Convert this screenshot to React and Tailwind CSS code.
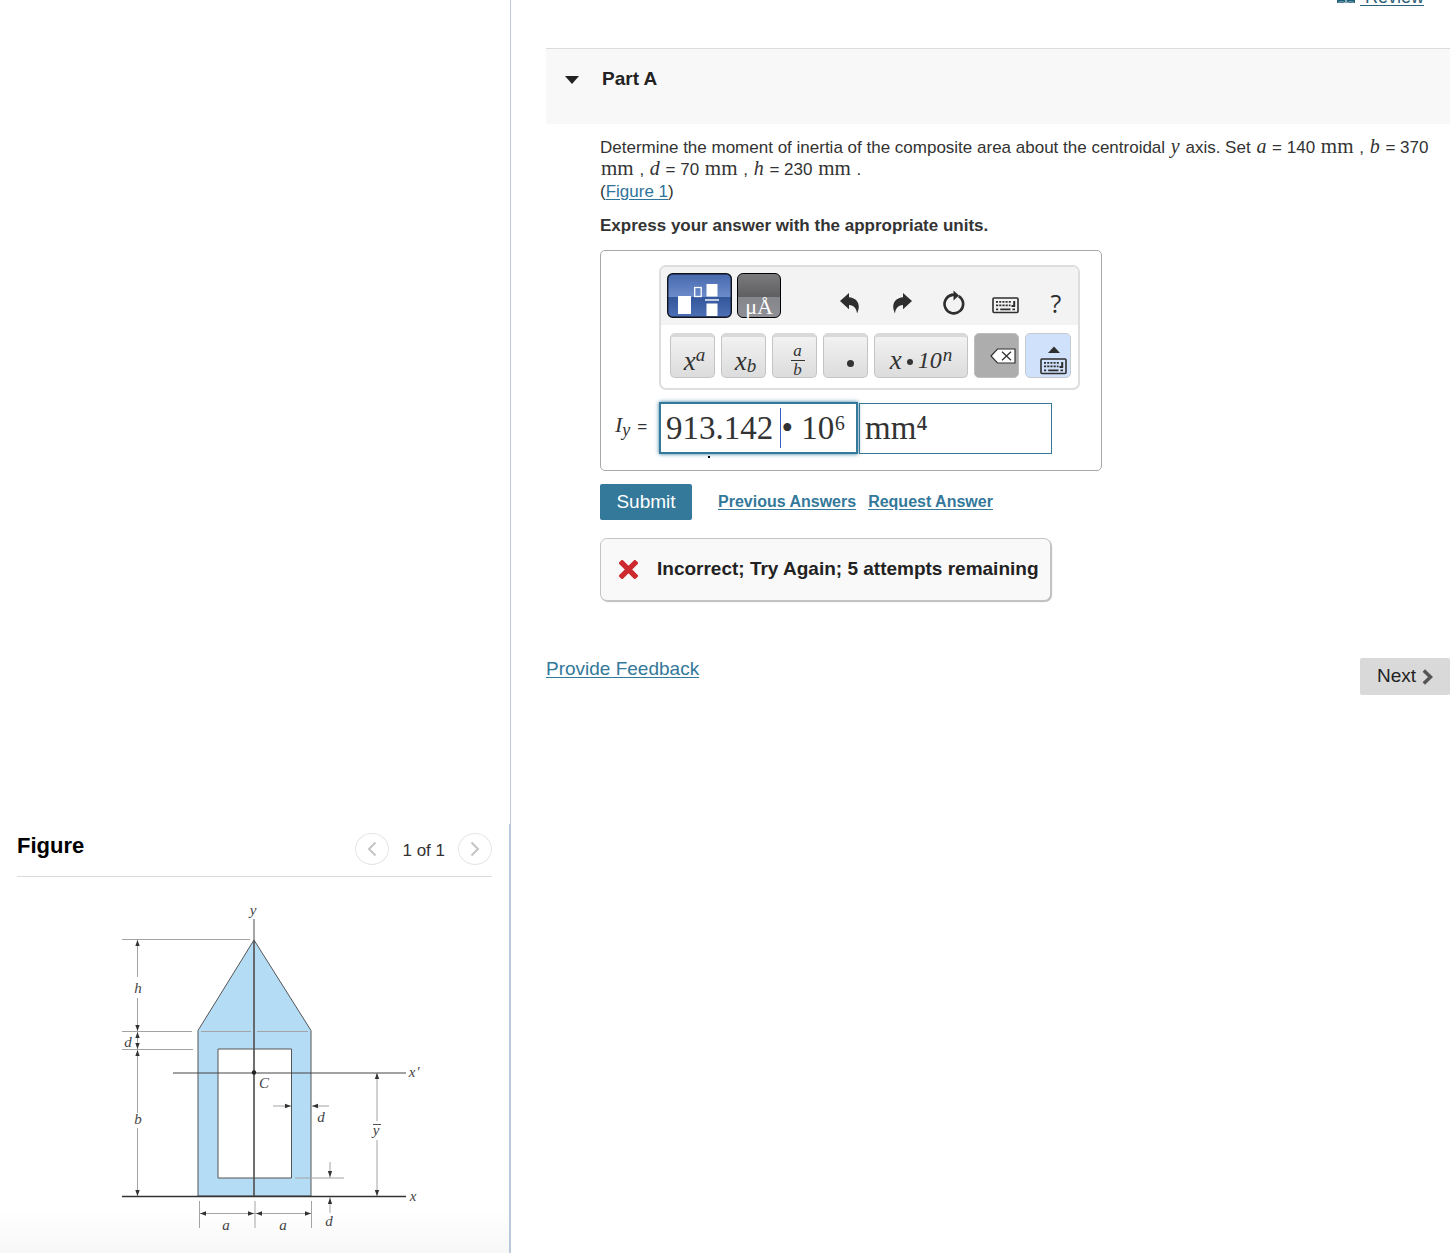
import React from "react";

const serif = "font-['Liberation_Serif',serif]";

function MathVar({ children }) {
  return (
    <i className="mx-px font-['Liberation_Serif',serif] text-[20px] leading-0">{children}</i>
  );
}

function Unit() {
  return <span className="mx-px font-['Liberation_Serif',serif] text-[21px] leading-0">mm</span>;
}

function KeyboardIcon() {
  return (
    <svg width="28" height="17" viewBox="0 0 28 17" aria-hidden="true">
      <rect x="1" y="1" width="25" height="14.5" rx="1" fill="none" stroke="#2e2e2e" strokeWidth="1.6" />
      <g stroke="#2e2e2e" fill="none">
        <path d="M4 4.9H20" strokeWidth="1.700" strokeDasharray="2 1.200" />
        <path d="M4 8.400H18.500" strokeWidth="1.700" strokeDasharray="2.200 1" />
        <path d="M4 12.300H6.200M8.200 12.300H18.500M20.500 12.300H23" strokeWidth="1.700" />
        <path d="M22.200 4V9H19.500" strokeWidth="2" />
      </g>
    </svg>
  );
}

function IconButton({ label, children }) {
  return (
    <button type="button" aria-label={label} className="flex h-8 w-8 items-center justify-center text-[#2e2e2e]">
      {children}
    </button>
  );
}

function KeyButton({ label, wide, children }) {
  return (
    <button
      type="button"
      aria-label={label}
      className={
        (wide ? "w-[94px]" : "w-[45px]") +
        " flex h-[45px] shrink-0 items-start justify-center rounded-[5px] border border-[#c4c4c4] border-t-4 border-t-[#d9d9d9] bg-linear-to-b from-[#f2f2f2] to-[#dcdcdc] text-[#333]"
      }
    >
      {children}
    </button>
  );
}

function Toolbar() {
  return (
    <div className="w-[421px] rounded-[7px] border-2 border-[#dedede] bg-white pb-[10px]">
      <div className="flex h-[58px] items-start rounded-t-[5px] bg-[#f3f3f3] pt-[6px] pl-[6px]">
        <button type="button" aria-label="Templates" className="rounded-[6px]">
          <svg width="65" height="45" viewBox="0 0 65 45">
            <defs>
              <linearGradient id="blueTop" x1="0" y1="0" x2="0" y2="1">
                <stop offset="0" stopColor="#4668ad" />
                <stop offset="0.53" stopColor="#6c8bc9" />
                <stop offset="0.54" stopColor="#34569b" />
                <stop offset="1" stopColor="#4d70b6" />
              </linearGradient>
            </defs>
            <rect x="0.7" y="0.7" width="63.6" height="43.6" rx="5" fill="url(#blueTop)" stroke="#10131c" strokeWidth="1.4" />
            <rect x="11" y="23" width="13" height="18" fill="#fff" />
            <rect x="27.7" y="14.5" width="6.5" height="9" fill="none" stroke="#fff" strokeWidth="1.3" />
            <rect x="39.5" y="11" width="11" height="12.5" fill="#fff" />
            <path d="M38 27H52" stroke="#fff" strokeWidth="1.4" />
            <rect x="39.5" y="30.5" width="11" height="12.5" fill="#fff" />
          </svg>
        </button>
        <button
          type="button"
          aria-label="Units and symbols"
          className="ml-[5px] flex h-[45px] w-11 items-end justify-center rounded-[6px] border border-black bg-[linear-gradient(#7b7b7d,#5f5f61_53%,#85858c_54%,#8f8f96)]"
        >
          <span className="font-['Liberation_Serif',serif] text-[22px] leading-[20px] text-white">μÅ</span>
        </button>
        <div className="ml-[53px] flex items-center gap-[20px] pt-[14px]">
          <IconButton label="Undo">
            <svg width="20" height="21" viewBox="0 0 20 21" fill="currentColor">
              <path d="M0 8 9 0v4.2c8 .6 12.500 7 8 16.300C16.600 15.500 14 12.300 9 12v4.200Z" />
            </svg>
          </IconButton>
          <IconButton label="Redo">
            <svg width="20" height="21" viewBox="0 0 20 21" fill="currentColor">
              <path d="M20 8 11 0v4.200C3 4.800-1.500 11.200 3 20.500 3.400 15.500 6 12.300 11 12v4.200Z" />
            </svg>
          </IconButton>
          <IconButton label="Reset">
            <svg width="24" height="26" viewBox="0 0 24 26">
              <path d="M15.500 5.500A9.300 9.300 0 1 1 9 5.200" transform="rotate(8 12 14)" fill="none" stroke="currentColor" strokeWidth="2.600" />
              <path d="M11.500 0.500 17 5.500 11.500 10.500Z" fill="currentColor" />
              <path d="M8 5.700Q10 4.600 12.500 4.600" fill="none" stroke="currentColor" strokeWidth="2.600" />
            </svg>
          </IconButton>
          <IconButton label="Keyboard shortcuts">
            <span className="pt-1"><KeyboardIcon /></span>
          </IconButton>
          <IconButton label="Help">
            <span className="pr-1 font-['Open_Sans',sans-serif] text-[25px] leading-none">?</span>
          </IconButton>
        </div>
      </div>
      <div className={"flex gap-[6px] pt-2 pl-[9px] italic " + serif}>
        <KeyButton label="Superscript">
          <span className="mt-[10px] ml-1 text-[27px] leading-7">x</span>
          <span className="mt-[6px] text-[19px] leading-6">a</span>
        </KeyButton>
        <KeyButton label="Subscript">
          <span className="mt-[10px] ml-1 text-[27px] leading-7">x</span>
          <span className="mt-[17px] text-[19px] leading-6">b</span>
        </KeyButton>
        <KeyButton label="Fraction">
          <span className="mt-[6px] ml-[6px] flex w-[14px] flex-col items-center text-[17px] leading-4">
            <span className="w-full border-b border-[#333] pb-px">a</span>
            <span className="pt-px">b</span>
          </span>
        </KeyButton>
        <KeyButton label="Multiplication dot">
          <span className="mt-[23px] ml-[10px] h-[7px] w-[7px] rounded-full bg-[#333]" />
        </KeyButton>
        <KeyButton label="Scientific notation" wide>
          <span className="mt-[9px] text-[27px] leading-7">x</span>
          <span className="mx-[5px] mt-[22px] h-[6px] w-[6px] rounded-full bg-[#333]" />
          <span className="mt-[9px] text-[24px] leading-7">10</span>
          <span className="mt-[6px] ml-px text-[19px] leading-6">n</span>
        </KeyButton>
        <button type="button" aria-label="Delete" className="flex h-[45px] w-[45px] items-center justify-end rounded-[5px] border border-[#bdbdbd] bg-[#adadad] pr-[2px]">
          <svg width="26" height="16" viewBox="0 0 26 16">
            <path d="M1 8 7.500 1H25V15H7.500Z" fill="#fff" stroke="#333" strokeWidth="1.200" />
            <path d="M12 3.800 21 12.200M21 3.800 12 12.200" stroke="#333" strokeWidth="1.300" />
          </svg>
        </button>
        <button type="button" aria-label="Toggle keyboard" className="flex h-[45px] w-[46px] flex-col items-end rounded-[5px] border border-[#c6c9ce] bg-[#d0e2fb] pr-[2px] pt-3">
          <svg width="28" height="7" viewBox="0 0 28 7" className="mb-[5px]">
            <path d="M8 7 14 0.500 20 7Z" fill="#2e2e2e" />
          </svg>
          <KeyboardIcon />
        </button>
      </div>
    </div>
  );
}

function Arrow({ x, y, dir }) {
  const shapes = {
    up: `M${x} ${y}l-2.200 6h4.400Z`,
    down: `M${x} ${y}l-2.200-6h4.400Z`,
    left: `M${x} ${y}l6-2.200v4.400Z`,
    right: `M${x} ${y}l-6-2.200v4.400Z`,
  };
  return <path d={shapes[dir]} fill="#333" />;
}

function AreaDiagram() {
  return (
    <svg className="mx-auto block" width="340" height="350" viewBox="100 895 340 350" role="img" aria-label="Composite area">
      <path d="M254 940 311 1030.500V1196H198V1030.500ZM218 1049V1178H291.500V1049Z" fillRule="evenodd" fill="#b4dcf5" stroke="#555" strokeWidth="1" />
      <g stroke="#a3a3a3" strokeWidth="1">
        <path d="M122 939.500H250M122 1031.500H192M122 1049.500H193M201 1031.500H251M257 1031.500H308" />
        <path d="M137.500 940V977M137.500 998V1113M137.500 1128V1196" />
        <path d="M377 1073V1121M377 1140V1196M295 1178H344M330 1162V1178M330 1197V1213" />
        <path d="M273 1106H291M311 1106H329M199.500 1201V1228M255 1201V1228M311.500 1201V1228M199 1213.500H311" />
      </g>
      <path d="M254 919V940" stroke="#777" strokeWidth="1.300" />
      <path d="M254 940V1196" stroke="#555" strokeWidth="1.700" />
      <path d="M173 1073H406" stroke="#444" strokeWidth="1" />
      <path d="M122 1196.500H406" stroke="#333" strokeWidth="1.500" />
      <circle cx="254" cy="1072.500" r="2.200" fill="#222" />
      <Arrow x={137.5} y={940} dir="up" />
      <Arrow x={137.5} y={1031} dir="down" />
      <Arrow x={137.5} y={1032} dir="up" />
      <Arrow x={137.5} y={1049} dir="down" />
      <Arrow x={137.5} y={1050} dir="up" />
      <Arrow x={137.5} y={1196} dir="down" />
      <Arrow x={377} y={1073} dir="up" />
      <Arrow x={377} y={1196} dir="down" />
      <Arrow x={330} y={1177} dir="down" />
      <Arrow x={330} y={1198} dir="up" />
      <Arrow x={291} y={1106} dir="right" />
      <Arrow x={312} y={1106} dir="left" />
      <Arrow x={200} y={1213.5} dir="left" />
      <Arrow x={254} y={1213.5} dir="right" />
      <Arrow x={256} y={1213.5} dir="left" />
      <Arrow x={311} y={1213.5} dir="right" />
      <g className="font-['Liberation_Serif',serif] text-[15px] italic" fill="#444" textAnchor="middle">
        <text x="253" y="915">y</text>
        <text x="138" y="993">h</text>
        <text x="128" y="1047">d</text>
        <text x="138" y="1124">b</text>
        <text x="264" y="1088">C</text>
        <text x="321" y="1122">d</text>
        <text x="376" y="1135">y</text>
        <text x="412" y="1077">x</text>
        <text x="418" y="1077">′</text>
        <text x="413" y="1201">x</text>
        <text x="226" y="1230">a</text>
        <text x="283" y="1230">a</text>
        <text x="329" y="1226">d</text>
      </g>
      <path d="M373 1124.500H381" stroke="#555" />
    </svg>
  );
}

function PageButton({ label, d }) {
  return (
    <button type="button" aria-label={label} className="flex h-8 w-[34px] items-center justify-center rounded-[50%] border border-[#e6e6e6]">
      <svg width="10" height="16" viewBox="0 0 10 16">
        <path d={d} fill="none" stroke="#c4c4c4" strokeWidth="2" />
      </svg>
    </button>
  );
}

function FigurePane() {
  return (
    <aside className="flex w-[511px] shrink-0 flex-col">
      <div className="flex-1 border-r border-[#b9c9db]" />
      <section className="border-r-2 border-[#b9c9db] bg-linear-to-b from-white from-90% to-[#f7f7f7] pt-[9px] pr-[17px] pb-2 pl-[17px]">
        <header className="mb-[18px] flex items-start justify-between border-b border-[#dcdcdc] pb-[11px]">
          <h2 className="text-[22px] leading-[26px] font-bold text-black">Figure</h2>
          <div className="flex items-center">
            <PageButton label="Previous figure" d="M8.500 1.500 2 8l6.500 6.500" />
            <span className="px-[13px] pt-1 text-[17px] leading-6">1 of 1</span>
            <PageButton label="Next figure" d="M1.500 1.500 8 8l-6.500 6.500" />
          </div>
        </header>
        <div className="pl-[31px]">
          <AreaDiagram />
        </div>
      </section>
    </aside>
  );
}

function AnswerBox() {
  return (
    <div className="w-[502px] rounded-[5px] border border-[#a8a8a8] pt-[14px] pb-4 pl-[14px]">
      <div className="pl-11">
        <Toolbar />
      </div>
      <div className="mt-3 flex items-center">
        <label htmlFor="value" className="w-[44px] pb-2 text-[17px]">
          <i className="font-['Liberation_Serif',serif] text-[22px]">I</i>
          <sub className="font-['Liberation_Serif',serif] text-[18px] italic">y</sub>
          <span className="pl-[7px] text-[17px]">=</span>
        </label>
        <div className="relative">
          <input
            id="value"
            defaultValue="913.142 • 10⁶"
            className="block h-[52px] w-[199px] border-2 border-[#34789a] bg-white pl-[5px] font-['Liberation_Serif',serif] text-[33px] text-[#333] shadow-[0_0_4px_#34789a] outline-none"
          />
          <span className="absolute top-[6px] left-[121px] h-10 w-px bg-[#3b5cc4]" />
          <span className="absolute top-[54px] left-[49px] h-[2px] w-[2px] bg-black" />
        </div>
        <input
          aria-label="Units"
          defaultValue="mm⁴"
          className="ml-px h-[51px] w-[193px] border border-[#34789a] bg-white pl-[5px] font-['Liberation_Serif',serif] text-[33px] text-[#333] outline-none"
        />
      </div>
    </div>
  );
}

export default function App() {
  return (
    <div className="flex min-h-screen overflow-hidden bg-white font-['Liberation_Sans',Arial,sans-serif] text-[#333]">
      <FigurePane />
      <main className="min-w-0 flex-1 pr-[6px] pl-[35px]">
        <div className="flex h-12 items-start justify-end pr-[26px]">
          <a href="#review" className="-mt-[14px] flex items-start text-[18px] leading-[22px] text-[#2f6178]">
            <svg width="18" height="16" viewBox="0 0 18 16" className="mt-[2px] mr-[5px]" aria-hidden="true">
              <path d="M0 1Q5-1 8.500 1.500V15H0ZM9.500 1.500Q13-1 18 1V15H9.500Z" fill="#1f5f78" />
              <path d="M1 14.300Q5 12.800 8.500 14.800M9.500 14.800Q13 12.800 17 14.300" stroke="#8db0bf" fill="none" />
            </svg>
            <span className="whitespace-pre underline underline-offset-2"> Review</span>
          </a>
        </div>
        <button type="button" aria-expanded="true" className="flex h-[76px] w-full items-start border-t border-[#dcdcdc] bg-[#f8f8f8] pt-[18px] pl-[19px] text-left">
          <svg width="14" height="8" viewBox="0 0 14 8" className="mt-[9px]" aria-hidden="true">
            <path d="M0 0H14L7 8Z" fill="#222" />
          </svg>
          <span className="pl-[23px] text-[19px] leading-6 font-bold text-[#222]">Part A</span>
        </button>

        <section className="pt-[13px] pl-[54px]">
          <p className="text-[17px] leading-[22px]">
            Determine the moment of inertia of the composite area about the centroidal <MathVar>y</MathVar> axis. Set{" "}
            <MathVar>a</MathVar> = 140 <Unit /> , <MathVar>b</MathVar> = 370 <Unit /> , <MathVar>d</MathVar> = 70 <Unit /> ,{" "}
            <MathVar>h</MathVar> = 230 <Unit /> .
            <br />
            (<a href="#figure" className="text-[#2f749a] underline underline-offset-2">Figure 1</a>)
          </p>
          <p className="mt-3 mb-[13px] text-[17px] leading-[22px] font-bold">Express your answer with the appropriate units.</p>

          <AnswerBox />

          <div className="mt-[13px] flex items-center">
            <button type="button" className="h-9 w-[92px] rounded-[2px] bg-[#34789a] text-[19px] text-white">Submit</button>
            <a href="#previous" className="ml-[26px] text-[16px] font-bold text-[#34789a] underline underline-offset-2">Previous Answers</a>
            <a href="#request" className="ml-3 text-[16px] font-bold text-[#34789a] underline underline-offset-2">Request Answer</a>
          </div>

          <div role="status" className="mt-[18px] flex h-[63px] w-[451px] items-center rounded-[7px] border border-[#c4c4c4] bg-[#f9f9f9] pl-[18px] shadow-[1px_1px_1px_#bbb]">
            <svg width="19" height="19" viewBox="0 0 18 18" aria-hidden="true">
              <path d="M3 3 15 15M15 3 3 15" stroke="#cc2a2e" strokeWidth="5" strokeLinecap="square" strokeLinejoin="round" />
            </svg>
            <span className="pl-[19px] text-[19px] font-bold whitespace-nowrap text-[#222]">Incorrect; Try Again; 5 attempts remaining</span>
          </div>
        </section>

        <footer className="mt-[57px] flex items-start justify-between">
          <a href="#feedback" className="text-[19px] leading-[22px] text-[#34789a] underline underline-offset-2">Provide Feedback</a>
          <button type="button" className="flex h-[37px] w-[90px] items-center justify-center gap-[6px] rounded-[2px] bg-[#d9d9d9] text-[19px] text-[#222]">
            Next
            <svg width="11" height="16" viewBox="0 0 11 16" aria-hidden="true">
              <path d="M1.800 1.500 8.500 8l-6.700 6.500" fill="none" stroke="#555" strokeWidth="3.500" />
            </svg>
          </button>
        </footer>
      </main>
    </div>
  );
}
